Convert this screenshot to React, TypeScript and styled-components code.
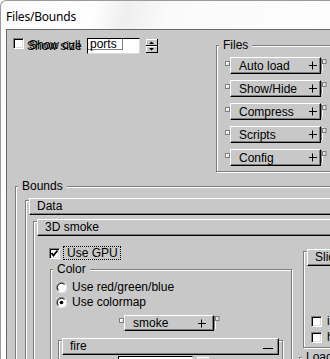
import styled, { createGlobalStyle, css } from "styled-components";

const GlobalStyle = createGlobalStyle`
  html, body {
    margin: 0;
    padding: 0;
    overflow: hidden;
    background: #ffffff;
  }
  body {
    font-family: "Liberation Sans", Arial, sans-serif;
    font-size: 12px;
    color: #000;
  }
`;

const GRAY = "#c8c8c8";
const SHADE = "#7d7d7d";

const etched = css`
  border: 1px solid ${SHADE};
  box-shadow: inset 1px 1px 0 #fff, 1px 1px 0 #fff;
`;

const raised = css`
  background: ${GRAY};
  border-top: 1px solid #fff;
  border-left: 1px solid #fff;
  border-bottom: 1px solid #000;
  border-right: 1px solid #000;
  box-shadow: inset -1px -1px 0 ${SHADE};
`;

const Window = styled.div`
  width: 330px;
  height: 359px;
  box-sizing: border-box;
  overflow: hidden;
  display: flex;
  flex-direction: column;
  border-top: 1px solid #9a9a9a;
  border-left: 1px solid #9a9a9a;
  border-top-left-radius: 6px;
  background: linear-gradient(
    105deg,
    #fbfbfb 0%,
    #ffffff 22%,
    #efefef 30%,
    #fafafa 40%,
    #ffffff 100%
  );
`;

const TitleBar = styled.div`
  height: 28px;
  flex-shrink: 0;
  display: flex;
  align-items: center;
  padding: 2px 0 0 5px;
  box-sizing: border-box;
  font-family: "Noto Sans", "Open Sans", sans-serif;
  font-size: 12px;
  letter-spacing: -0.2px;
`;

const Client = styled.div`
  flex: 1;
  margin-left: 5px;
  background: ${GRAY};
  border-top: 1px solid #6a6a6a;
  border-left: 1px solid #6a6a6a;
  overflow: hidden;
`;

const TopRow = styled.div`
  display: flex;
  align-items: flex-start;
`;

const Controls = styled.div`
  width: 209px;
  flex-shrink: 0;
  display: flex;
  align-items: flex-start;
  padding: 8px 0 0 6px;
  box-sizing: border-box;
`;

const CheckBox = styled.span<{ $checked?: boolean }>`
  width: 11px;
  height: 11px;
  flex-shrink: 0;
  box-sizing: border-box;
  display: flex;
  align-items: center;
  justify-content: center;
  background: #fff;
  border-top: 1px solid ${SHADE};
  border-left: 1px solid ${SHADE};
  border-bottom: 1px solid #fff;
  border-right: 1px solid #fff;
  box-shadow: inset 1px 1px 0 #000, inset -1px -1px 0 #dcdcdc;
`;

const OverlapLabels = styled.span`
  position: relative;
  width: 63px;
  height: 14px;
  flex-shrink: 0;
  line-height: 14px;
  white-space: nowrap;
`;

const Label = styled.span<{ $dx: number; $dy: number }>`
  position: absolute;
  left: ${(p) => p.$dx}px;
  top: ${(p) => p.$dy}px;
`;

const TextBox = styled.span<{ $width: number }>`
  width: ${(p) => p.$width}px;
  height: 16px;
  flex-shrink: 0;
  box-sizing: border-box;
  background: #fff;
  border-top: 1px solid #000;
  border-left: 1px solid #000;
  border-right: 1px solid #dcdcdc;
  border-bottom: 1px solid #dcdcdc;
  display: flex;
  align-items: flex-start;
`;

const TextValue = styled.span`
  height: 10px;
  line-height: 11px;
  padding: 0 5px 0 2px;
  border-right: 1px solid ${SHADE};
  border-bottom: 1px solid ${SHADE};
  overflow: visible;
`;

const Spinner = styled.span`
  margin: 1px 0 0 6px;
  display: flex;
`;

const FilesPanel = styled.div`
  position: relative;
  width: 120px;
  flex-shrink: 0;
  margin-top: 15px;
  padding: 11px 0 5px 8px;
  display: flex;
  flex-direction: column;
  gap: 6px;
  ${etched}
`;

const PanelTitle = styled.span`
  position: absolute;
  top: -8px;
  left: 2px;
  padding: 0 4px;
  line-height: 14px;
  background: ${GRAY};
  white-space: nowrap;
`;

const ButtonRow = styled.div`
  display: flex;
  align-items: flex-start;
`;

const Nub = styled.span<{ $top: number }>`
  width: 3px;
  height: 3px;
  flex-shrink: 0;
  margin-top: ${(p) => p.$top}px;
  border: 1px solid ${SHADE};
  box-shadow: inset 1px 1px 0 #fff;
  background: #e4e4e4;
`;

const Button = styled.span<{ $width: number; $height: number; $padRight: number }>`
  width: ${(p) => p.$width}px;
  height: ${(p) => p.$height}px;
  flex-shrink: 0;
  box-sizing: border-box;
  display: flex;
  align-items: center;
  padding: 0 ${(p) => p.$padRight}px 0 8px;
  line-height: 14px;
  white-space: nowrap;
  ${raised}
`;

const ButtonText = styled.span`
  flex: 1;
`;

const BoundsPanel = styled.div`
  position: relative;
  width: 340px;
  height: 200px;
  margin: 14px 0 0 8px;
  ${etched}
`;

const RolloutFrame = styled.div<{ $mt: number; $ml: number; $width: number }>`
  width: ${(p) => p.$width}px;
  margin: ${(p) => p.$mt}px 0 0 ${(p) => p.$ml}px;
  box-sizing: border-box;
  ${etched}
`;

const RolloutHeader = styled.div`
  height: 17px;
  margin: -3px 3px 0 3px;
  box-sizing: border-box;
  display: flex;
  align-items: center;
  padding: 0 5px 0 7px;
  line-height: 15px;
  white-space: nowrap;
  ${raised}
`;

const SmokeBody = styled.div`
  display: flex;
  align-items: flex-start;
`;

const LeftColumn = styled.div`
  width: 243px;
  flex-shrink: 0;
  margin: 10px 0 0 15px;
`;

const CheckRow = styled.div<{ $height: number }>`
  height: ${(p) => p.$height}px;
  display: flex;
  align-items: center;
  white-space: nowrap;
`;

const FocusLabel = styled.span`
  margin-left: 3px;
  padding: 0 2px 0 3px;
  line-height: 12px;
  border: 1px dotted #000;
`;

const ColorPanel = styled.div`
  position: relative;
  width: 242px;
  height: 120px;
  margin: 9px 0 0 1px;
  box-sizing: border-box;
  padding-top: 10px;
  ${etched}
`;

const RadioRow = styled.div`
  height: 15px;
  display: flex;
  align-items: center;
  gap: 5px;
  padding-left: 5px;
  line-height: 15px;
  white-space: nowrap;
`;

const ListRow = styled.div`
  display: flex;
  align-items: flex-start;
  margin: 5px 0 0 68px;
`;

const FieldRow = styled.div`
  display: flex;
  align-items: flex-start;
  margin: 1px 0 0 59px;
  gap: 4px;
`;

const SmallButton = styled.span`
  width: 11px;
  height: 10px;
  margin-top: 1px;
  border-top: 1px solid #fff;
  border-left: 1px solid #fff;
  background: #d8d8d8;
`;

const RightColumn = styled.div`
  width: 60px;
  flex-shrink: 0;
  margin: 0 0 0 7px;
`;

const SliList = styled.div`
  padding: 47px 0 2px 7px;
`;

const SliText = styled.span`
  margin-left: 5px;
`;

const LoadPanel = styled.div`
  position: relative;
  height: 40px;
  margin-top: 9px;
  ${etched}
`;

const Plus = () => (
  <svg width="8" height="9" viewBox="0 0 8 9">
    <path d="M0 4.5H8M3.5 0.5V8.5" stroke="#000" strokeWidth="1" />
  </svg>
);

const Minus = () => (
  <svg width="10" height="9" viewBox="0 0 10 9">
    <path d="M0 6.5H10" stroke="#000" strokeWidth="1" />
  </svg>
);

const NubRight = ({ top }: { top: number }) => (
  <svg width="6" height="15" viewBox="0 0 6 15" style={{ flexShrink: 0 }}>
    <path d="M0.5 1V14" stroke={SHADE} />
    <path d="M1.5 1V14" stroke="#fff" />
    <rect x="1.5" y={top + 0.5} width="3.5" height="4" fill="#e4e4e4" stroke={SHADE} />
  </svg>
);

const Check = () => (
  <svg width="9" height="9" viewBox="0 0 9 9">
    <path d="M1.5 4L3.5 6.5L7.5 1.5" fill="none" stroke="#000" strokeWidth="1.8" />
  </svg>
);

const Radio = ({ on }: { on?: boolean }) => (
  <svg width="11" height="11" viewBox="0 0 12 12" style={{ flexShrink: 0 }}>
    <rect width="12" height="12" fill="#d2d2d2" />
    <circle cx="6" cy="6" r="5.5" fill="#fff" />
    <path d="M2.1 9.9A5.5 5.5 0 0 1 9.9 2.1" fill="none" stroke={SHADE} />
    <path d="M2.8 9.2A4.5 4.5 0 0 1 9.2 2.8" fill="none" stroke="#000" />
    <path d="M9.9 2.1A5.5 5.5 0 0 1 2.1 9.9" fill="none" stroke="#e8e8e8" />
    {on && <circle cx="6" cy="6" r="2" fill="#000" />}
  </svg>
);

const SpinArrows = () => (
  <svg width="12" height="14" viewBox="0 0 12 14">
    <rect x="0" y="0" width="12" height="14" fill="#000" />
    <rect x="0" y="0" width="11" height="6" fill="#fff" />
    <rect x="1" y="1" width="10" height="5" fill={GRAY} />
    <rect x="0" y="7" width="11" height="6" fill="#fff" />
    <rect x="1" y="8" width="10" height="5" fill={GRAY} />
    <path d="M3 5H8L5.5 2.5Z" fill="#000" />
    <path d="M3 9H8L5.5 11.5Z" fill="#000" />
  </svg>
);

const files = ["Auto load", "Show/Hide", "Compress", "Scripts", "Config"];

export default function App() {
  return (
    <>
      <GlobalStyle />
      <Window>
        <TitleBar>Files/Bounds</TitleBar>
        <Client>
          <TopRow>
            <Controls>
              <CheckBox />
              <OverlapLabels>
                <Label $dx={3} $dy={1}>
                  Show size
                </Label>
                <Label $dx={5} $dy={0}>
                  Show cull
                </Label>
              </OverlapLabels>
              <TextBox $width={53}>
                <TextValue>ports</TextValue>
              </TextBox>
              <Spinner>
                <SpinArrows />
              </Spinner>
            </Controls>
            <FilesPanel>
              <PanelTitle>Files</PanelTitle>
              {files.map((name) => (
                <ButtonRow key={name}>
                  <Nub $top={4} />
                  <Button $width={91} $height={17} $padRight={3}>
                    <ButtonText>{name}</ButtonText>
                    <Plus />
                  </Button>
                  <NubRight top={2} />
                </ButtonRow>
              ))}
            </FilesPanel>
          </TopRow>

          <BoundsPanel>
            <PanelTitle>Bounds</PanelTitle>
            <RolloutFrame $mt={13} $ml={9} $width={320}>
              <RolloutHeader>Data</RolloutHeader>
              <RolloutFrame $mt={6} $ml={7} $width={310}>
                <RolloutHeader>3D smoke</RolloutHeader>
                <SmokeBody>
                  <LeftColumn>
                    <CheckRow $height={14}>
                      <CheckBox $checked>
                        <Check />
                      </CheckBox>
                      <FocusLabel>Use GPU</FocusLabel>
                    </CheckRow>
                    <ColorPanel>
                      <PanelTitle>Color</PanelTitle>
                      <RadioRow>
                        <Radio />
                        Use red/green/blue
                      </RadioRow>
                      <RadioRow>
                        <Radio on />
                        Use colormap
                      </RadioRow>
                      <ListRow>
                        <Nub $top={3} />
                        <Button $width={90} $height={16} $padRight={7}>
                          <ButtonText>smoke</ButtonText>
                          <Plus />
                        </Button>
                        <NubRight top={1} />
                      </ListRow>
                      <RolloutFrame $mt={9} $ml={7} $width={225}>
                        <RolloutHeader>
                          <ButtonText>fire</ButtonText>
                          <Minus />
                        </RolloutHeader>
                        <FieldRow>
                          <TextBox $width={75} />
                          <SmallButton />
                        </FieldRow>
                      </RolloutFrame>
                    </ColorPanel>
                  </LeftColumn>
                  <RightColumn>
                    <RolloutFrame $mt={15} $ml={4} $width={60}>
                      <RolloutHeader>Sliders</RolloutHeader>
                      <SliList>
                        <CheckRow $height={16}>
                          <CheckBox />
                          <SliText>invert</SliText>
                        </CheckRow>
                        <CheckRow $height={16}>
                          <CheckBox />
                          <SliText>hide</SliText>
                        </CheckRow>
                      </SliList>
                    </RolloutFrame>
                    <LoadPanel>
                      <PanelTitle>Load</PanelTitle>
                    </LoadPanel>
                  </RightColumn>
                </SmokeBody>
              </RolloutFrame>
            </RolloutFrame>
          </BoundsPanel>
        </Client>
      </Window>
    </>
  );
}
